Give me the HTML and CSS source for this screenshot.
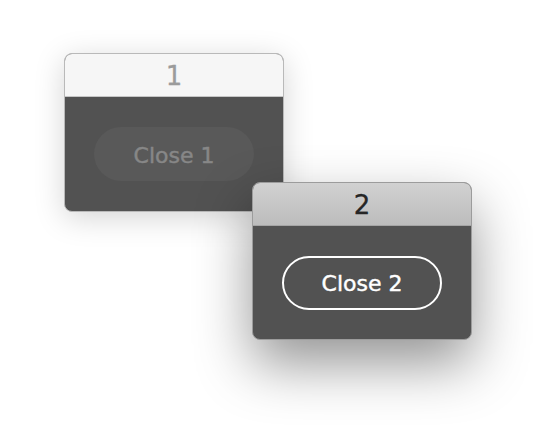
FILE: index.html
```html
<!DOCTYPE html>
<html lang="en">
<head>
    <meta charset="UTF-8">
    <meta name="viewport" content="width=device-width, initial-scale=1.0">
    <title>Windows</title>
    <link rel="stylesheet" href="styles.css">
</head>
<body>
    <div class="desktop">
        <div class="window inactive win-one">
            <div class="titlebar">1</div>
            <div class="content">
                <button type="button" class="btn">Close 1</button>
            </div>
        </div>

        <div class="window active win-two">
            <div class="titlebar">2</div>
            <div class="content">
                <button type="button" class="btn">Close 2</button>
            </div>
        </div>
    </div>
</body>
</html>
```

FILE: styles.css
```css
*
{
    margin: 0;
    padding: 0;
    box-sizing: border-box;
    font-family: "DejaVu Sans", Verdana, sans-serif;
}
body
{
    background: #fff;
    overflow: hidden;
}
.desktop
{
    position: relative;
    width: 558px;
    height: 440px;
}

/* each window sits at its own spot on the desktop */
.window
{
    position: absolute;
    width: 220px;
    display: flex;
    flex-direction: column;
    border-radius: 8px;
    overflow: hidden;
    background: #525252;
}
.win-one
{
    left: 64px;
    top: 53px;
    height: 159px;
    border: 1px solid #b9b9b9;
    box-shadow: 0 6px 30px rgba(0, 0, 0, 0.17);
}
.win-two
{
    left: 252px;
    top: 182px;
    height: 158px;
    border: 1px solid #9c9c9c;
    box-shadow: 0 24px 55px rgba(0, 0, 0, 0.42);
}

.titlebar
{
    height: 43px;
    flex: none;
    display: flex;
    justify-content: center;
    align-items: center;
    padding-top: 2px;
    font-size: 26px;
    -webkit-text-stroke: 0.3px currentColor;
}
.inactive .titlebar
{
    background: #f6f6f6;
    border-bottom: 1px solid #c6c6c6;
    color: #9b9b9b;
}
.active .titlebar
{
    background: linear-gradient(#d1d1d1, #bcbcbc);
    border-bottom: 1px solid #a5a5a5;
    color: #262626;
}

.content
{
    flex: 1;
    display: flex;
    justify-content: center;
    align-items: center;
}
.btn
{
    width: 160px;
    height: 54px;
    border-radius: 27px;
    font-size: 22px;
    padding-top: 2px;
    cursor: pointer;
    -webkit-text-stroke: 0.45px currentColor;
}
.inactive .btn
{
    background: #595959;
    border: none;
    color: #878787;
}
.active .btn
{
    background: transparent;
    border: 2px solid #fff;
    color: #fff;
}
```
